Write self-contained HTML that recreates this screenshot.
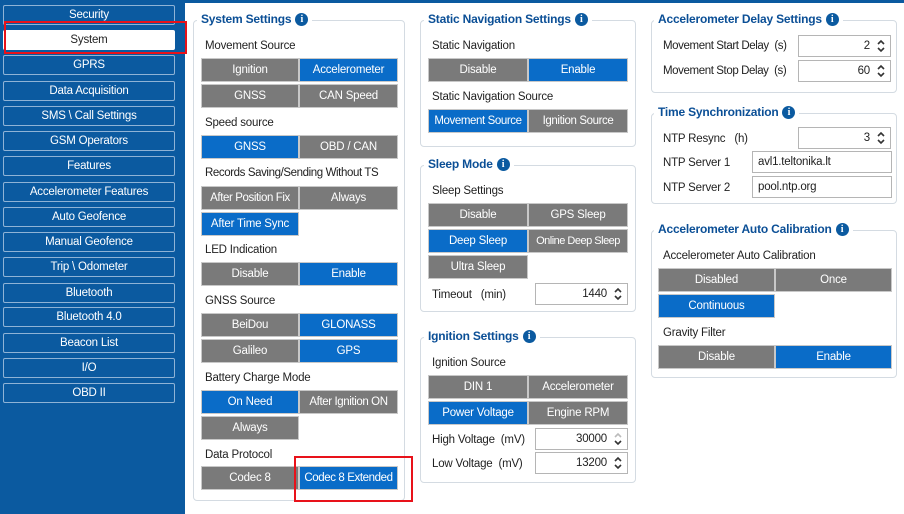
<!DOCTYPE html>
<html><head><meta charset="utf-8"><style>
*{box-sizing:border-box;margin:0;padding:0}
body{width:904px;height:514px;overflow:hidden;background:#fff;font-family:"Liberation Sans",sans-serif;font-size:11.5px;letter-spacing:-0.2px;color:#222;position:relative}
.top{position:absolute;left:0;top:0;width:904px;height:3px;background:#0b5aa0}
.side{position:absolute;left:0;top:0;width:185px;height:514px;background:#0b5aa0}
.sb{position:absolute;left:3px;width:172px;height:20px;border:1px solid #8fb3d6;border-radius:2px;color:#fff;text-align:center;line-height:18px}
.sb.sel{background:#fff;color:#222;border-color:#fff}
.red{position:absolute;border:2px solid #e8121a}
.fs{position:absolute;border:1px solid #d4dbe2;border-radius:4px}
.lg{position:absolute;background:#fff;padding:0 4px;color:#0b4f96;font-weight:bold;font-size:12px;line-height:14px;white-space:nowrap;height:15px}
.i{display:inline-block;width:13px;height:13px;border-radius:50%;background:#0b5aa0;color:#fff;font-size:10px;line-height:13px;text-align:center;vertical-align:top;margin-left:4px;margin-top:1px;font-family:"Liberation Serif",serif;letter-spacing:0}
.l{position:absolute;white-space:nowrap;line-height:14px}
.b{position:absolute;height:24px;line-height:22px;text-align:center;color:#fff;background:#7a7a7a;border:1px solid #c8c8c8;white-space:nowrap;overflow:hidden}
.on{background:#0a6cc8}
.in{position:absolute;height:22px;border:1px solid #b5b5b5;background:#fff;line-height:20px;text-align:right;padding-right:20px}
.in.t{text-align:left;padding-left:5px;padding-right:0}
.sp{position:absolute;right:4px;top:3px;width:10px;height:14px}
</style></head><body>
<div class="top"></div>
<div class="side"></div>
<div class="sb" style="top:5px">Security</div>
<div class="sb sel" style="top:30px">System</div>
<div class="sb" style="top:55px">GPRS</div>
<div class="sb" style="top:81px">Data Acquisition</div>
<div class="sb" style="top:106px">SMS \ Call Settings</div>
<div class="sb" style="top:131px">GSM Operators</div>
<div class="sb" style="top:156px">Features</div>
<div class="sb" style="top:182px">Accelerometer Features</div>
<div class="sb" style="top:207px">Auto Geofence</div>
<div class="sb" style="top:232px">Manual Geofence</div>
<div class="sb" style="top:257px">Trip \ Odometer</div>
<div class="sb" style="top:283px">Bluetooth</div>
<div class="sb" style="top:307px">Bluetooth 4.0</div>
<div class="sb" style="top:333px">Beacon List</div>
<div class="sb" style="top:358px">I/O</div>
<div class="sb" style="top:383px">OBD II</div>
<div class="red" style="left:4px;top:21px;width:183px;height:33px"></div>

<!-- System Settings -->
<div class="fs" style="left:193px;top:20px;width:212px;height:481px"></div>
<div class="lg" style="left:197px;top:12px">System Settings<span class="i">i</span></div>
<div class="l" style="left:205px;top:39px">Movement Source</div>
<div class="b" style="left:201px;top:58px;width:98px">Ignition</div>
<div class="b on" style="left:299px;top:58px;width:99px">Accelerometer</div>
<div class="b" style="left:201px;top:84px;width:98px">GNSS</div>
<div class="b" style="left:299px;top:84px;width:99px">CAN Speed</div>
<div class="l" style="left:205px;top:116px">Speed source</div>
<div class="b on" style="left:201px;top:135px;width:98px">GNSS</div>
<div class="b" style="left:299px;top:135px;width:99px">OBD / CAN</div>
<div class="l" style="left:205px;top:166px;letter-spacing:-0.4px">Records Saving/Sending Without TS</div>
<div class="b" style="left:201px;top:186px;width:98px;letter-spacing:-0.4px">After Position Fix</div>
<div class="b" style="left:299px;top:186px;width:99px">Always</div>
<div class="b on" style="left:201px;top:212px;width:98px">After Time Sync</div>
<div class="l" style="left:205px;top:243px">LED Indication</div>
<div class="b" style="left:201px;top:262px;width:98px">Disable</div>
<div class="b on" style="left:299px;top:262px;width:99px">Enable</div>
<div class="l" style="left:205px;top:294px">GNSS Source</div>
<div class="b" style="left:201px;top:313px;width:98px">BeiDou</div>
<div class="b on" style="left:299px;top:313px;width:99px">GLONASS</div>
<div class="b" style="left:201px;top:339px;width:98px">Galileo</div>
<div class="b on" style="left:299px;top:339px;width:99px">GPS</div>
<div class="l" style="left:205px;top:371px">Battery Charge Mode</div>
<div class="b on" style="left:201px;top:390px;width:98px">On Need</div>
<div class="b" style="left:299px;top:390px;width:99px;letter-spacing:-0.4px">After Ignition ON</div>
<div class="b" style="left:201px;top:416px;width:98px">Always</div>
<div class="l" style="left:205px;top:448px">Data Protocol</div>
<div class="b" style="left:201px;top:466px;width:98px">Codec 8</div>
<div class="b on" style="left:299px;top:466px;width:99px;letter-spacing:-0.4px">Codec 8 Extended</div>
<div class="red" style="left:294px;top:456px;width:119px;height:46px"></div>

<!-- Static Navigation -->
<div class="fs" style="left:420px;top:20px;width:216px;height:127px"></div>
<div class="lg" style="left:424px;top:12px">Static Navigation Settings<span class="i">i</span></div>
<div class="l" style="left:432px;top:39px">Static Navigation</div>
<div class="b" style="left:428px;top:58px;width:100px">Disable</div>
<div class="b on" style="left:528px;top:58px;width:100px">Enable</div>
<div class="l" style="left:432px;top:90px">Static Navigation Source</div>
<div class="b on" style="left:428px;top:109px;width:100px;letter-spacing:-0.4px">Movement Source</div>
<div class="b" style="left:528px;top:109px;width:100px;letter-spacing:-0.4px">Ignition Source</div>

<!-- Sleep -->
<div class="fs" style="left:420px;top:165px;width:216px;height:147px"></div>
<div class="lg" style="left:424px;top:157px">Sleep Mode<span class="i">i</span></div>
<div class="l" style="left:432px;top:184px">Sleep Settings</div>
<div class="b" style="left:428px;top:203px;width:100px">Disable</div>
<div class="b" style="left:528px;top:203px;width:100px">GPS Sleep</div>
<div class="b on" style="left:428px;top:229px;width:100px">Deep Sleep</div>
<div class="b" style="left:528px;top:229px;width:100px;letter-spacing:-0.5px;font-size:11px">Online Deep Sleep</div>
<div class="b" style="left:428px;top:255px;width:100px">Ultra Sleep</div>
<div class="l" style="left:432px;top:288px">Timeout &nbsp;&nbsp;(min)</div>
<div class="in" style="left:535px;top:283px;width:93px">1440<svg class="sp" viewBox="0 0 10 14"><path d="M2 5L5 2L8 5M2 9L5 12L8 9" fill="none" stroke="#333" stroke-width="1.6"/></svg></div>

<!-- Ignition -->
<div class="fs" style="left:420px;top:337px;width:216px;height:146px"></div>
<div class="lg" style="left:424px;top:329px">Ignition Settings<span class="i">i</span></div>
<div class="l" style="left:432px;top:356px">Ignition Source</div>
<div class="b" style="left:428px;top:375px;width:100px">DIN 1</div>
<div class="b" style="left:528px;top:375px;width:100px">Accelerometer</div>
<div class="b on" style="left:428px;top:401px;width:100px">Power Voltage</div>
<div class="b" style="left:528px;top:401px;width:100px">Engine RPM</div>
<div class="l" style="left:432px;top:433px">High Voltage &nbsp;(mV)</div>
<div class="in" style="left:535px;top:428px;width:93px">30000<svg class="sp" viewBox="0 0 10 14"><path d="M2 5L5 2L8 5" fill="none" stroke="#bbb" stroke-width="1.6"/><path d="M2 9L5 12L8 9" fill="none" stroke="#333" stroke-width="1.6"/></svg></div>
<div class="l" style="left:432px;top:457px">Low Voltage &nbsp;(mV)</div>
<div class="in" style="left:535px;top:452px;width:93px">13200<svg class="sp" viewBox="0 0 10 14"><path d="M2 5L5 2L8 5M2 9L5 12L8 9" fill="none" stroke="#333" stroke-width="1.6"/></svg></div>

<!-- Accel delay -->
<div class="fs" style="left:651px;top:20px;width:246px;height:73px"></div>
<div class="lg" style="left:654px;top:12px">Accelerometer Delay Settings<span class="i">i</span></div>
<div class="l" style="left:663px;top:39px;letter-spacing:-0.4px">Movement Start Delay &nbsp;(s)</div>
<div class="in" style="left:798px;top:35px;width:93px">2<svg class="sp" viewBox="0 0 10 14"><path d="M2 5L5 2L8 5M2 9L5 12L8 9" fill="none" stroke="#333" stroke-width="1.6"/></svg></div>
<div class="l" style="left:663px;top:64px;letter-spacing:-0.4px">Movement Stop Delay &nbsp;(s)</div>
<div class="in" style="left:798px;top:60px;width:93px">60<svg class="sp" viewBox="0 0 10 14"><path d="M2 5L5 2L8 5M2 9L5 12L8 9" fill="none" stroke="#333" stroke-width="1.6"/></svg></div>

<!-- Time sync -->
<div class="fs" style="left:651px;top:113px;width:246px;height:91px"></div>
<div class="lg" style="left:654px;top:105px">Time Synchronization<span class="i">i</span></div>
<div class="l" style="left:663px;top:132px">NTP Resync &nbsp;&nbsp;(h)</div>
<div class="in" style="left:798px;top:127px;width:93px">3<svg class="sp" viewBox="0 0 10 14"><path d="M2 5L5 2L8 5M2 9L5 12L8 9" fill="none" stroke="#333" stroke-width="1.6"/></svg></div>
<div class="l" style="left:663px;top:156px">NTP Server 1</div>
<div class="in t" style="left:752px;top:151px;width:140px">avl1.teltonika.lt</div>
<div class="l" style="left:663px;top:181px">NTP Server 2</div>
<div class="in t" style="left:752px;top:176px;width:140px">pool.ntp.org</div>

<!-- Auto cal -->
<div class="fs" style="left:651px;top:230px;width:246px;height:148px"></div>
<div class="lg" style="left:654px;top:222px">Accelerometer Auto Calibration<span class="i">i</span></div>
<div class="l" style="left:663px;top:249px">Accelerometer Auto Calibration</div>
<div class="b" style="left:658px;top:268px;width:117px">Disabled</div>
<div class="b" style="left:775px;top:268px;width:117px">Once</div>
<div class="b on" style="left:658px;top:294px;width:117px">Continuous</div>
<div class="l" style="left:663px;top:326px">Gravity Filter</div>
<div class="b" style="left:658px;top:345px;width:117px">Disable</div>
<div class="b on" style="left:775px;top:345px;width:117px">Enable</div>
</body></html>
